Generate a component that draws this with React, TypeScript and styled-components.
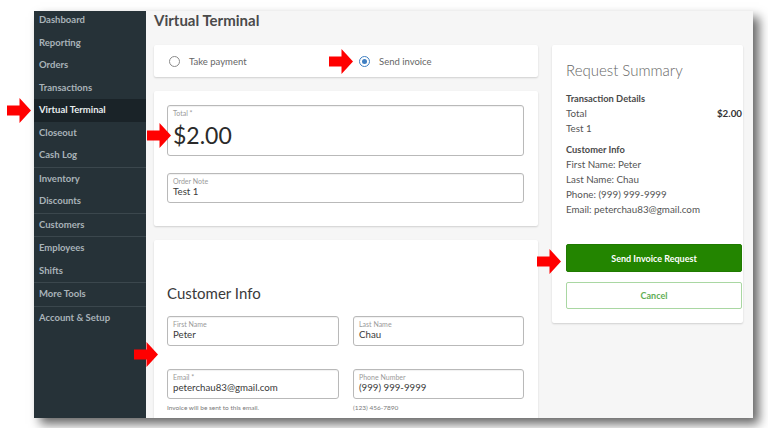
import React from "react";
import styled, { createGlobalStyle } from "styled-components";

const GlobalStyle = createGlobalStyle`
  html, body {
    margin: 0;
    padding: 0;
    background: #ffffff;
  }
  body {
    font-family: Lato, "Open Sans", "Liberation Sans", sans-serif;
  }
`;

const Stage = styled.div`
  position: relative;
  width: 768px;
  height: 428px;
  overflow: hidden;
  background: #ffffff;
  padding: 11px 0 0 34px;
  box-sizing: border-box;
`;

const Frame = styled.div`
  width: 719px;
  height: 407px;
  display: flex;
  overflow: hidden;
  box-shadow: 6px 6px 10px rgba(0, 0, 0, 0.6);
`;

const Sidebar = styled.nav`
  width: 112px;
  flex-shrink: 0;
  background: #263238;
  display: flex;
  flex-direction: column;
`;

const NavList = styled.div`
  margin-top: -2px;
  display: flex;
  flex-direction: column;
`;

const NavItem = styled.div<{ $active?: boolean }>`
  height: 22.5px;
  line-height: 22.5px;
  padding-left: 5px;
  font-size: 9.5px;
  font-weight: 700;
  color: ${(p) => (p.$active ? "#e8ecee" : "#a9b3b8")};
  background: ${(p) => (p.$active ? "#1a2328" : "transparent")};
  white-space: nowrap;
`;

const NavDivider = styled.div`
  height: 1px;
  background: #3b474d;
`;

const Main = styled.main`
  flex: 1;
  background: #f6f6f6;
  padding: 0 10px 0 8px;
  display: flex;
  flex-direction: column;
`;

const PageTitle = styled.h1`
  margin: 0;
  font-size: 15px;
  line-height: 18px;
  font-weight: 700;
  color: #4a4a4a;
`;

const Columns = styled.div`
  margin-top: 16px;
  display: grid;
  grid-template-columns: 384px 191px;
  column-gap: 14px;
  align-items: start;
`;

const LeftColumn = styled.div`
  display: flex;
  flex-direction: column;
  gap: 14px;
`;

const Card = styled.section`
  background: #ffffff;
  border-radius: 2px;
  box-shadow: 0 1px 2px rgba(0, 0, 0, 0.16);
`;

const RadioCard = styled(Card)`
  height: 32px;
  padding-left: 15px;
  display: grid;
  grid-template-columns: 190px 1fr;
  align-items: center;
`;

const RadioOption = styled.label`
  display: flex;
  align-items: center;
  gap: 9px;
  font-size: 9.5px;
  color: #666;
`;

const RadioCircle = styled.span<{ $checked?: boolean }>`
  width: 11px;
  height: 11px;
  box-sizing: border-box;
  border-radius: 50%;
  border: 1px solid ${(p) => (p.$checked ? "#3f7fc2" : "#8a8a8a")};
  display: flex;
  align-items: center;
  justify-content: center;
  &::after {
    content: "";
    width: 5px;
    height: 5px;
    border-radius: 50%;
    background: ${(p) => (p.$checked ? "#3f7fc2" : "transparent")};
  }
`;

const OrderCard = styled(Card)`
  padding: 14px 14px 23px 13px;
  display: flex;
  flex-direction: column;
  gap: 17px;
`;

const FieldBox = styled.div<{ $large?: boolean }>`
  box-sizing: border-box;
  height: ${(p) => (p.$large ? "51px" : "30px")};
  border: 1px solid #b9b9b9;
  border-radius: 3px;
  box-shadow: inset 0 1px 1px rgba(0, 0, 0, 0.06);
  padding: 3px 5px 0;
  display: flex;
  flex-direction: column;
`;

const FieldLabel = styled.span`
  font-size: 7px;
  line-height: 8px;
  color: #9a9a9a;
`;

const FieldValue = styled.span<{ $large?: boolean }>`
  font-size: ${(p) => (p.$large ? "23px" : "9.7px")};
  line-height: ${(p) => (p.$large ? "26px" : "13px")};
  color: ${(p) => (p.$large ? "#2a2a2a" : "#3a3a3a")};
  margin-top: ${(p) => (p.$large ? "5px" : "0")};
`;

const CustomerCard = styled(Card)`
  padding: 14px 14px 0 13px;
  height: 200px;
`;

const SectionTitle = styled.h2`
  margin: 29px 0 13px;
  font-size: 15px;
  line-height: 20px;
  font-weight: 400;
  color: #3a3a3a;
`;

const FieldGrid = styled.div`
  display: grid;
  grid-template-columns: 172px 171px;
  column-gap: 14px;
  row-gap: 23px;
`;

const FieldGroup = styled.div`
  display: flex;
  flex-direction: column;
`;

const Helper = styled.span`
  margin-top: 5px;
  font-size: 6.5px;
  line-height: 8px;
  color: #7a7a7a;
`;

const SummaryCard = styled(Card)`
  padding: 14px 0 14px 14px;
  display: flex;
  flex-direction: column;
`;

const SummaryTitle = styled.h2`
  margin: 0;
  font-size: 15px;
  line-height: 22px;
  font-weight: 300;
  color: #666;
`;

const SummaryHeading = styled.div<{ $first?: boolean }>`
  margin-top: ${(p) => (p.$first ? "9.5px" : "6px")};
  font-size: 9.3px;
  line-height: 15px;
  font-weight: 700;
  color: #4a4a4a;
`;

const SummaryLine = styled.div`
  display: flex;
  justify-content: space-between;
  font-size: 9.8px;
  line-height: 15px;
  color: #555;
  padding-right: 1px;
`;

const Amount = styled.span`
  font-weight: 700;
  color: #333;
`;

const Actions = styled.div`
  margin-top: 27.5px;
  display: flex;
  flex-direction: column;
  gap: 10px;
  padding-right: 1px;
`;

const Button = styled.button<{ $primary?: boolean }>`
  height: ${(p) => (p.$primary ? "28px" : "27px")};
  border-radius: 2px;
  font-family: inherit;
  font-size: 9px;
  font-weight: 700;
  cursor: pointer;
  color: ${(p) => (p.$primary ? "#ffffff" : "#5fae55")};
  background: ${(p) => (p.$primary ? "#238500" : "#ffffff")};
  border: 1px solid ${(p) => (p.$primary ? "#1f7a00" : "#a9d7a2")};
`;

const Arrow = styled.svg`
  position: absolute;
  width: 24px;
  height: 25px;
`;

const RedArrow: React.FC<{ left: number; top: number }> = ({ left, top }) => (
  <Arrow viewBox="0 0 24 25" style={{ left, top }}>
    <polygon points="0,7.5 12.5,7.5 12.5,0 24,12.5 12.5,25 12.5,17.5 0,17.5" fill="#ff0000" />
  </Arrow>
);

const navGroups: string[][] = [
  ["Dashboard", "Reporting", "Orders", "Transactions", "Virtual Terminal", "Closeout", "Cash Log"],
  ["Inventory", "Discounts"],
  ["Customers"],
  ["Employees", "Shifts"],
  ["More Tools"],
  ["Account & Setup"],
];

const App: React.FC = () => {
  return (
    <>
      <GlobalStyle />
      <Stage>
        <Frame>
          <Sidebar>
            <NavList>
              {navGroups.map((group, gi) => (
                <React.Fragment key={gi}>
                  {gi > 0 && <NavDivider />}
                  {group.map((item) => (
                    <NavItem key={item} $active={item === "Virtual Terminal"}>
                      {item}
                    </NavItem>
                  ))}
                </React.Fragment>
              ))}
            </NavList>
          </Sidebar>
          <Main>
            <PageTitle>Virtual Terminal</PageTitle>
            <Columns>
              <LeftColumn>
                <RadioCard>
                  <RadioOption>
                    <RadioCircle />
                    Take payment
                  </RadioOption>
                  <RadioOption>
                    <RadioCircle $checked />
                    Send invoice
                  </RadioOption>
                </RadioCard>
                <OrderCard>
                  <FieldBox $large>
                    <FieldLabel>Total *</FieldLabel>
                    <FieldValue $large>$2.00</FieldValue>
                  </FieldBox>
                  <FieldBox>
                    <FieldLabel>Order Note</FieldLabel>
                    <FieldValue>Test 1</FieldValue>
                  </FieldBox>
                </OrderCard>
                <CustomerCard>
                  <SectionTitle>Customer Info</SectionTitle>
                  <FieldGrid>
                    <FieldBox>
                      <FieldLabel>First Name</FieldLabel>
                      <FieldValue>Peter</FieldValue>
                    </FieldBox>
                    <FieldBox>
                      <FieldLabel>Last Name</FieldLabel>
                      <FieldValue>Chau</FieldValue>
                    </FieldBox>
                    <FieldGroup>
                      <FieldBox>
                        <FieldLabel>Email *</FieldLabel>
                        <FieldValue>peterchau83@gmail.com</FieldValue>
                      </FieldBox>
                      <Helper>Invoice will be sent to this email.</Helper>
                    </FieldGroup>
                    <FieldGroup>
                      <FieldBox>
                        <FieldLabel>Phone Number</FieldLabel>
                        <FieldValue>(999) 999-9999</FieldValue>
                      </FieldBox>
                      <Helper>(123) 456-7890</Helper>
                    </FieldGroup>
                  </FieldGrid>
                </CustomerCard>
              </LeftColumn>
              <SummaryCard>
                <SummaryTitle>Request Summary</SummaryTitle>
                <SummaryHeading $first>Transaction Details</SummaryHeading>
                <SummaryLine>
                  <span>Total</span>
                  <Amount>$2.00</Amount>
                </SummaryLine>
                <SummaryLine>Test 1</SummaryLine>
                <SummaryHeading>Customer Info</SummaryHeading>
                <SummaryLine>First Name: Peter</SummaryLine>
                <SummaryLine>Last Name: Chau</SummaryLine>
                <SummaryLine>Phone: (999) 999-9999</SummaryLine>
                <SummaryLine>Email: peterchau83@gmail.com</SummaryLine>
                <Actions>
                  <Button $primary>Send Invoice Request</Button>
                  <Button>Cancel</Button>
                </Actions>
              </SummaryCard>
            </Columns>
          </Main>
        </Frame>
        <RedArrow left={7} top={98} />
        <RedArrow left={147} top={123} />
        <RedArrow left={329} top={49} />
        <RedArrow left={537} top={249} />
        <RedArrow left={134} top={342} />
      </Stage>
    </>
  );
};

export default App;
